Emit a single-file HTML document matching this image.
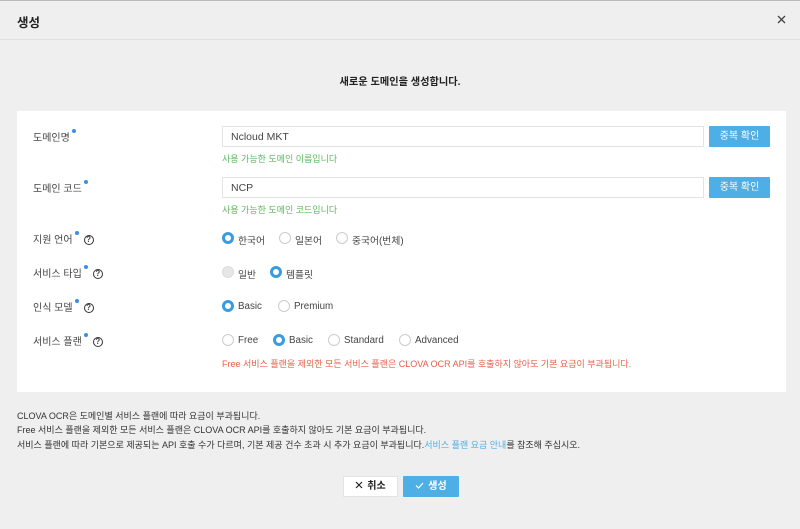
<!DOCTYPE html>
<html><head><meta charset="utf-8"><style>
*{box-sizing:border-box;margin:0;padding:0}
body{width:800px;height:529px;background:#efefef;font-family:"Liberation Sans","Noto Sans CJK KR",sans-serif;color:#333;position:relative;overflow:hidden}
.a{position:absolute;white-space:nowrap}
.hdr{left:0;top:0;width:800px;height:40px;border-bottom:1px solid #e0e0e0;border-top:1px solid #bbb}
.card{left:17px;top:111px;width:769px;height:281px;background:#fff}
.lbl{font-size:10px;color:#444}
.dot{display:inline-block;width:4px;height:4px;border-radius:50%;background:#3a8ee6;vertical-align:top;margin-left:2px;margin-top:0px}
.q{display:inline-block;width:10px;height:10px;border:1.3px solid #333;border-radius:50%;font-size:8px;line-height:8px;text-align:center;font-weight:bold;margin-left:5px;vertical-align:middle}
.inp{height:21px;border:1px solid #e3e3e3;background:#fff;font-size:10.5px;padding:4px 8px;color:#444}
.btn{height:21px;width:61px;background:#4eaee6;color:#fff;font-size:10px;text-align:center;line-height:21px;border-radius:1px}
.ok{font-size:9px;color:#5cb85c}
.r{width:12px;height:12px;border-radius:50%;border:1px solid #ccc;background:#fff}
.r.on{border:3.5px solid #3a9be0}
.r.dis{background:#e6e6e6;border-color:#ddd}
.rt{font-size:9.8px;color:#444;margin-top:1px}
.ft{font-size:9px;color:#333;left:17px}
</style></head><body>
<div class="a hdr"></div>
<div class="a" style="left:17px;top:12px;font-size:12.5px;font-weight:bold;color:#222">생성</div>
<svg class="a" style="left:777px;top:15px" width="9" height="9" viewBox="0 0 9 9"><path d="M1 1L8 8M8 1L1 8" stroke="#444" stroke-width="1.3"/></svg>
<div class="a" style="left:0;width:800px;top:73px;text-align:center;font-size:10.2px;font-weight:bold;color:#222">새로운 도메인을 생성합니다.</div>
<div class="a card"></div>

<div class="a lbl" style="left:33px;top:129px">도메인명<span class="dot"></span></div>
<div class="a inp" style="left:222px;top:126px;width:482px">Ncloud MKT</div>
<div class="a btn" style="left:709px;top:126px">중복 확인</div>
<div class="a ok" style="left:222px;top:152px">사용 가능한 도메인 이름입니다</div>

<div class="a lbl" style="left:33px;top:180px">도메인 코드<span class="dot"></span></div>
<div class="a inp" style="left:222px;top:177px;width:482px">NCP</div>
<div class="a btn" style="left:709px;top:177px">중복 확인</div>
<div class="a ok" style="left:222px;top:203px">사용 가능한 도메인 코드입니다</div>

<div class="a lbl" style="left:33px;top:231px">지원 언어<span class="dot"></span><span class="q">?</span></div>
<div class="a r on" style="left:222px;top:232px"></div><div class="a rt" style="left:238px;top:232px">한국어</div>
<div class="a r" style="left:279px;top:232px"></div><div class="a rt" style="left:295px;top:232px">일본어</div>
<div class="a r" style="left:336px;top:232px"></div><div class="a rt" style="left:352px;top:232px">중국어(번체)</div>

<div class="a lbl" style="left:33px;top:265px">서비스 타입<span class="dot"></span><span class="q">?</span></div>
<div class="a r dis" style="left:222px;top:266px"></div><div class="a rt" style="left:238px;top:266px">일반</div>
<div class="a r on" style="left:270px;top:266px"></div><div class="a rt" style="left:286px;top:266px">템플릿</div>

<div class="a lbl" style="left:33px;top:299px">인식 모델<span class="dot"></span><span class="q">?</span></div>
<div class="a r on" style="left:222px;top:300px"></div><div class="a rt" style="left:238px;top:300px">Basic</div>
<div class="a r" style="left:278px;top:300px"></div><div class="a rt" style="left:294px;top:300px">Premium</div>

<div class="a lbl" style="left:33px;top:333px">서비스 플랜<span class="dot"></span><span class="q">?</span></div>
<div class="a r" style="left:222px;top:334px"></div><div class="a rt" style="left:238px;top:334px">Free</div>
<div class="a r on" style="left:273px;top:334px"></div><div class="a rt" style="left:289px;top:334px">Basic</div>
<div class="a r" style="left:328px;top:334px"></div><div class="a rt" style="left:344px;top:334px">Standard</div>
<div class="a r" style="left:399px;top:334px"></div><div class="a rt" style="left:415px;top:334px">Advanced</div>
<div class="a" style="left:222px;top:357px;font-size:9px;color:#e8604c">Free 서비스 플랜을 제외한 모든 서비스 플랜은 CLOVA OCR API를 호출하지 않아도 기본 요금이 부과됩니다.</div>

<div class="a ft" style="top:409px">CLOVA OCR은 도메인별 서비스 플랜에 따라 요금이 부과됩니다.</div>
<div class="a ft" style="top:423px">Free 서비스 플랜을 제외한 모든 서비스 플랜은 CLOVA OCR API를 호출하지 않아도 기본 요금이 부과됩니다.</div>
<div class="a ft" style="top:438px">서비스 플랜에 따라 기본으로 제공되는 API 호출 수가 다르며, 기본 제공 건수 초과 시 추가 요금이 부과됩니다.<span style="color:#4eaee6">서비스 플랜 요금 안내</span>를 참조해 주십시오.</div>

<div class="a" style="left:343px;top:476px;width:55px;height:21px;background:#fff;border:1px solid #e3e3e3;font-size:10px;font-weight:bold;text-align:center;line-height:19px;color:#222"><svg width="8" height="8" viewBox="0 0 8 8" style="margin-right:4px"><path d="M1 1L7 7M7 1L1 7" stroke="#222" stroke-width="1.2"/></svg>취소</div>
<div class="a" style="left:403px;top:476px;width:56px;height:21px;background:#4eaee6;border-radius:1px;font-size:10px;font-weight:bold;text-align:center;line-height:21px;color:#fff"><svg width="9" height="7" viewBox="0 0 9 7" style="margin-right:4px"><path d="M1 3.5L3.5 6L8 1" stroke="#fff" stroke-width="1.2" fill="none"/></svg>생성</div>
</body></html>
